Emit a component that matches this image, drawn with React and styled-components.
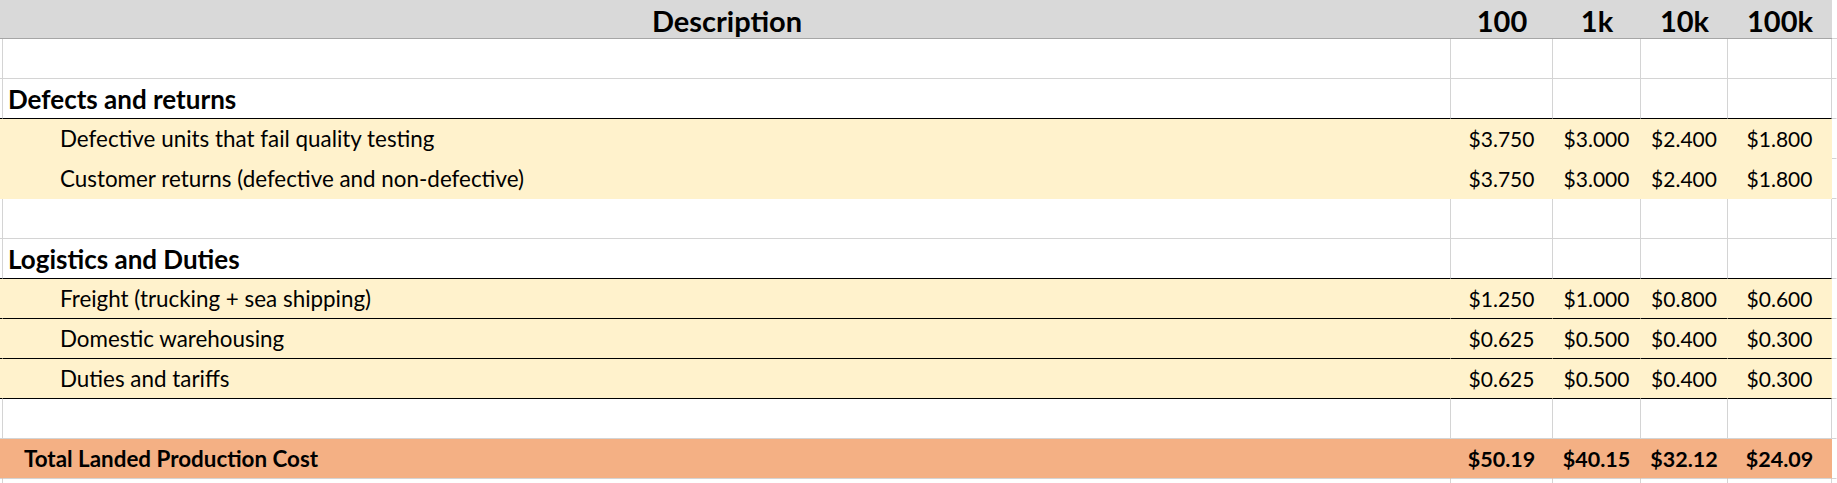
import React from 'react';
import styled, { createGlobalStyle } from 'styled-components';

const GlobalStyle = createGlobalStyle`
  html, body {
    margin: 0;
    padding: 0;
    background: #ffffff;
  }
  body {
    font-family: Lato, "Open Sans", "Liberation Sans", sans-serif;
    color: #000;
  }
`;

// column widths taken from the sheet: A, Description, 100, 1k, 10k, 100k, spill
const COLS = '3px 1448px 102px 88px 87px 104px 1fr';

const GRID = '#d4d4d4';
const YELLOW = '#fff2cc';
const ORANGE = '#f4b084';

const Sheet = styled.div`
  width: 1837px;
  height: 483px;
  overflow: hidden;
  display: flex;
  flex-direction: column;
`;

const HeaderRow = styled.div`
  display: grid;
  grid-template-columns: ${COLS};
  height: 39px;
  flex-shrink: 0;
`;

const HeaderCell = styled.div`
  box-sizing: border-box;
  display: flex;
  align-items: center;
  justify-content: center;
  background: ${p => (p.$spill ? '#fff' : '#d9d9d9')};
  border-bottom: 1px solid ${p => (p.$spill ? GRID : '#a6a6a6')};
  font-size: 29px;
  font-weight: 700;
  padding-top: 2px;
`;

const Row = styled.div`
  display: grid;
  grid-template-columns: ${COLS};
  height: 40px;
  flex-shrink: 0;
`;

const Cell = styled.div`
  box-sizing: border-box;
  display: flex;
  align-items: center;
  justify-content: ${p => p.$justify || 'flex-start'};
  padding-left: ${p => p.$indent || 0}px;
  background: ${p => p.$bg || '#fff'};
  border-bottom: 1px solid ${p => p.$rule || 'transparent'};
  border-right: 1px solid ${p => (p.$grid ? GRID : 'transparent')};
  font-size: ${p => p.$size || 22.4}px;
  font-weight: ${p => (p.$bold ? 700 : 400)};
  white-space: nowrap;
`;

const sizes = ['100', '1k', '10k', '100k'];

const rows = [
  { kind: 'blank' },
  { kind: 'section', label: 'Defects and returns' },
  { kind: 'item', label: 'Defective units that fail quality testing', values: ['$3.750', '$3.000', '$2.400', '$1.800'] },
  { kind: 'item', label: 'Customer returns (defective and non-defective)', values: ['$3.750', '$3.000', '$2.400', '$1.800'] },
  { kind: 'blank' },
  { kind: 'section', label: 'Logistics and Duties' },
  { kind: 'item', ruled: true, label: 'Freight (trucking + sea shipping)', values: ['$1.250', '$1.000', '$0.800', '$0.600'] },
  { kind: 'item', ruled: true, label: 'Domestic warehousing', values: ['$0.625', '$0.500', '$0.400', '$0.300'] },
  { kind: 'item', ruled: true, label: 'Duties and tariffs', values: ['$0.625', '$0.500', '$0.400', '$0.300'] },
  { kind: 'blank' },
  { kind: 'total', label: 'Total Landed Production Cost', values: ['$50.19', '$40.15', '$32.12', '$24.09'] },
  { kind: 'blank' },
];

function SheetRow({ row }) {
  const { kind, label, values = ['', '', '', ''] } = row;

  if (kind === 'blank' || kind === 'section') {
    const rule = kind === 'section' ? '#000' : GRID;
    return (
      <Row>
        <Cell $grid $rule={rule} />
        <Cell $grid $rule={rule} $indent={5} $bold $size={26}>
          {label}
        </Cell>
        {values.map((v, i) => (
          <Cell key={i} $grid $rule={rule} />
        ))}
        <Cell $rule={GRID} />
      </Row>
    );
  }

  const bg = kind === 'total' ? ORANGE : YELLOW;
  const rule = kind === 'total' ? GRID : row.ruled ? '#000' : undefined;
  const bold = kind === 'total';

  return (
    <Row>
      <Cell $bg={bg} $rule={rule} />
      <Cell $bg={bg} $rule={rule} $indent={bold ? 21 : 57} $bold={bold}>
        {label}
      </Cell>
      {values.map((v, i) => (
        <Cell key={i} $bg={bg} $rule={rule} $justify="center" $bold={bold} $size={bold ? 21.5 : 21}>
          {v}
        </Cell>
      ))}
      <Cell $rule={GRID} />
    </Row>
  );
}

export default function App() {
  return (
    <>
      <GlobalStyle />
      <Sheet>
        <HeaderRow>
          <HeaderCell />
          <HeaderCell>Description</HeaderCell>
          {sizes.map(s => (
            <HeaderCell key={s}>{s}</HeaderCell>
          ))}
          <HeaderCell $spill />
        </HeaderRow>
        {rows.map((r, i) => (
          <SheetRow key={i} row={r} />
        ))}
      </Sheet>
    </>
  );
}
